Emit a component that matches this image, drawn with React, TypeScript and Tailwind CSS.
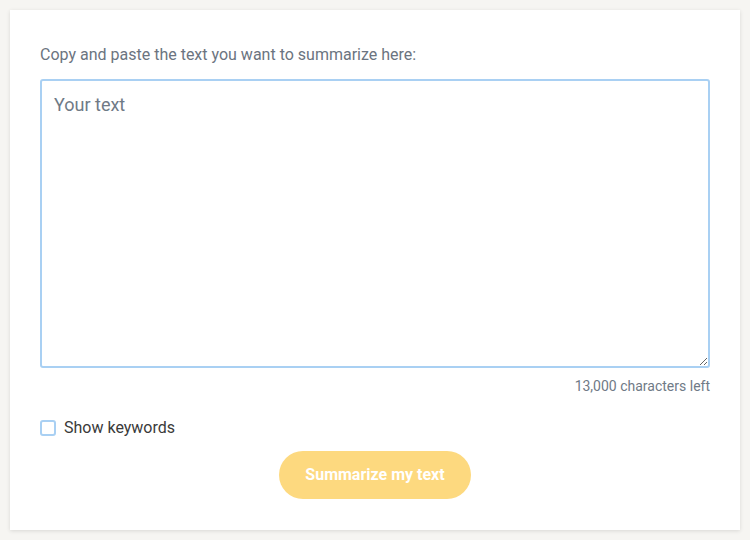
import React, { useState } from 'react';

const MAX = 13000;

export default function App() {
  const [text, setText] = useState('');
  const [keywords, setKeywords] = useState(false);

  return (
    <div className="min-h-[540px] bg-[#f6f5f2] p-[10px]" style={{ fontFamily: 'Roboto, "Noto Sans", sans-serif' }}>
      <div className="bg-white shadow-[0_1px_4px_rgba(0,0,0,0.12)] px-[30px] pt-[35px] pb-[31px]">
        <label className="block text-[16px] leading-[20px] text-[#6b7480] mb-[14px]">
          Copy and paste the text you want to summarize here:
        </label>
        <textarea
          className="block w-full h-[289px] border-2 border-[#a9d0f3] rounded-[3px] px-[12px] pt-[12px] pb-[10px] text-[18px] leading-[24px] text-[#333] placeholder:text-[#6f7a86] outline-none resize-y"
          placeholder="Your text"
          value={text}
          maxLength={MAX}
          onChange={e => setText(e.target.value)}
        />
        <div className="text-right text-[14px] leading-[18px] text-[#6f7a86] mt-[9px]">
          {(MAX - text.length).toLocaleString('en-US')} characters left
        </div>
        <label className="flex items-center gap-[8px] mt-[23px] w-fit cursor-pointer">
          <span
            className={
              'w-[16px] h-[16px] rounded-[3px] border-2 border-[#a9d0f3] ' +
              (keywords ? 'bg-[#a9d0f3]' : 'bg-white')
            }
          />
          <input type="checkbox" className="hidden" checked={keywords} onChange={e => setKeywords(e.target.checked)} />
          <span className="text-[16px] leading-[20px] text-[#3a3a3a]">Show keywords</span>
        </label>
        <div className="flex justify-center mt-[13px]">
          <button className="w-[192px] h-[48px] rounded-full bg-[#fdd97f] text-white font-bold text-[16px]">
            Summarize my text
          </button>
        </div>
      </div>
    </div>
  );
}
